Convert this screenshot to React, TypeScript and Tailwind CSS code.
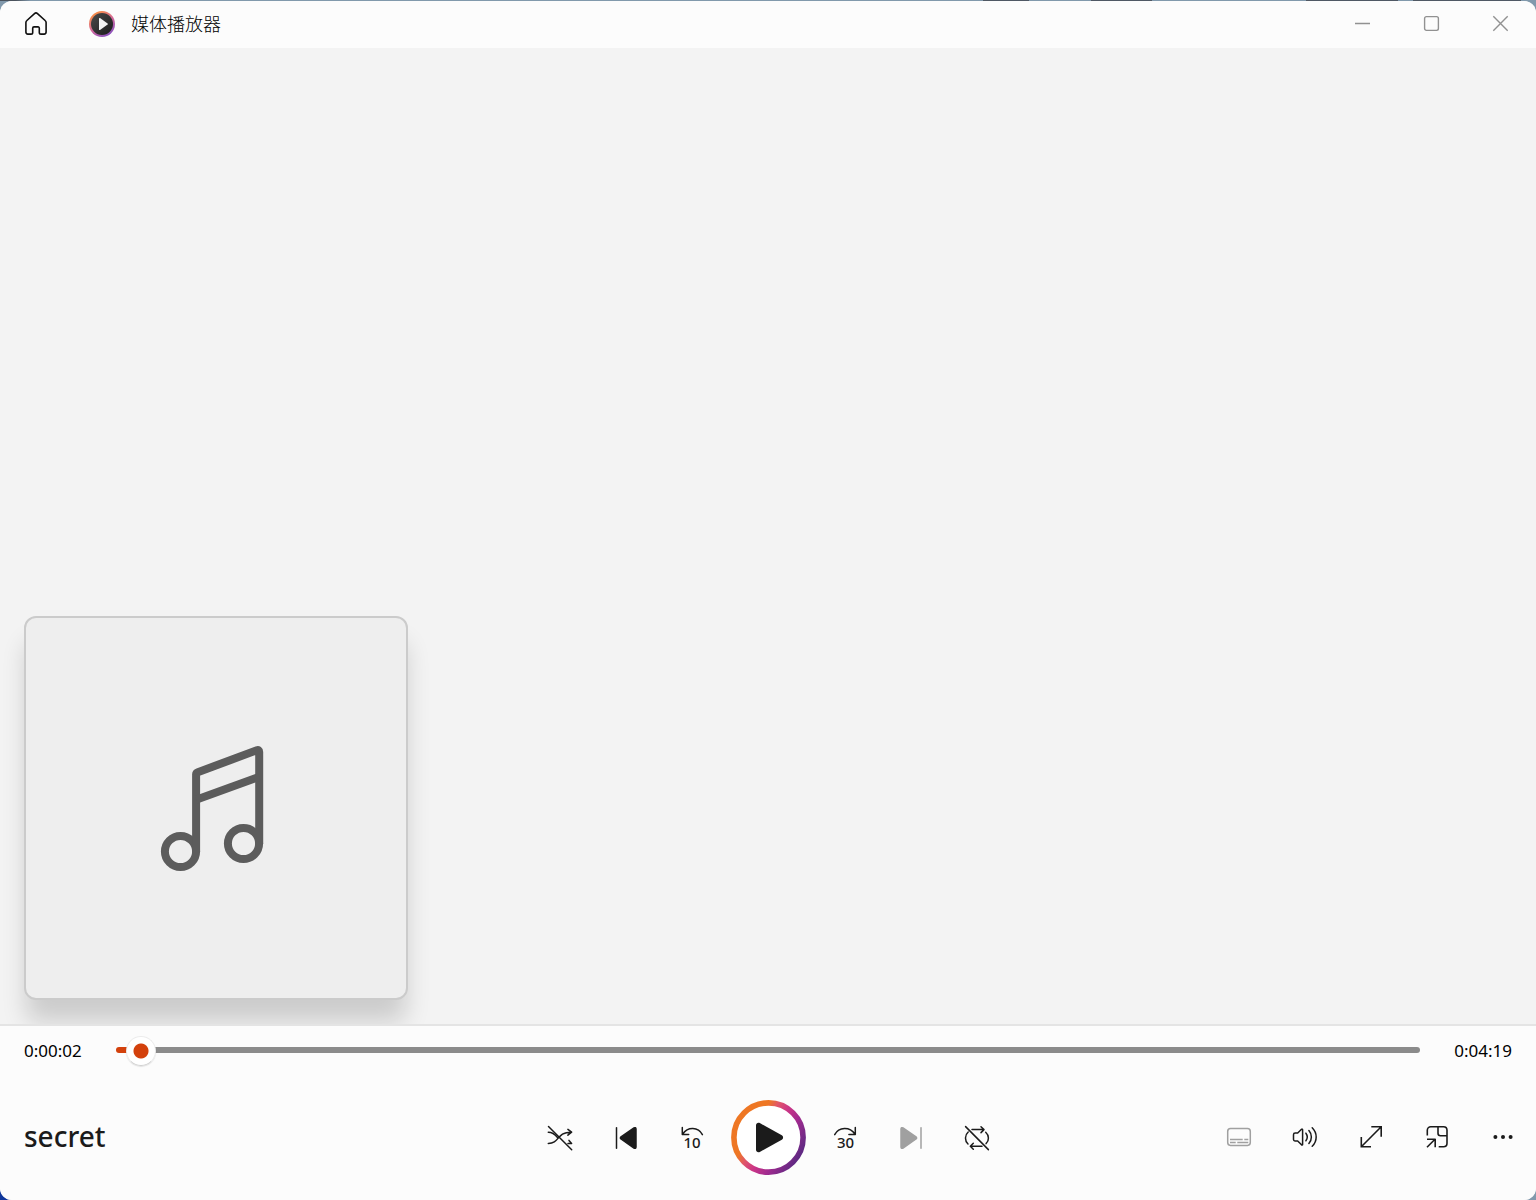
import { useState } from "react";
import type { CSSProperties, ReactNode } from "react";

function Icon({ children, w = 1.5 }: { children: ReactNode; w?: number }) {
  return (
    <svg
      viewBox="0 0 30 30"
      className="size-[30px]"
      fill="none"
      stroke="currentColor"
      strokeWidth={w}
      strokeLinecap="round"
      strokeLinejoin="round"
      aria-hidden="true"
    >
      {children}
    </svg>
  );
}

function ControlButton({ label, disabled, children }: { label: string; disabled?: boolean; children: ReactNode }) {
  return (
    <button
      type="button"
      aria-label={label}
      disabled={disabled}
      className="flex size-[60px] items-center justify-center rounded-md text-[#1b1b1b] disabled:text-[#a0a0a0]"
    >
      {children}
    </button>
  );
}

function CaptionButton({ label, children }: { label: string; children: ReactNode }) {
  return (
    <button type="button" aria-label={label} className="flex h-[45px] w-[69px] items-center justify-center text-[#919191]">
      <svg viewBox="0 0 17 17" className="size-[17px]" fill="none" stroke="currentColor" strokeWidth="1.4" aria-hidden="true">
        {children}
      </svg>
    </button>
  );
}

function TitleBar() {
  return (
    <header className="flex items-start justify-between bg-[#fcfcfc] pr-px pb-0.5">
      <div className="flex items-center">
        <button type="button" aria-label="主页" className="flex h-[45px] w-[72px] items-center justify-center text-[#111]">
          <svg viewBox="0 0 24 24" className="size-6" fill="none" stroke="currentColor" strokeWidth="1.6" strokeLinejoin="round" aria-hidden="true">
            <path d="M10.5 1.6a2.3 2.3 0 0 1 3 0l7.6 6.9c.7.6 1 1.3 1 2.1v9.5a2 2 0 0 1-2 2H17a1.7 1.7 0 0 1-1.7-1.7v-4.2c0-.8-.5-1.3-1.3-1.3h-4c-.8 0-1.3.5-1.3 1.3v4.2A1.7 1.7 0 0 1 7 22.1H3.9a2 2 0 0 1-2-2v-9.5c0-.8.3-1.5 1-2.1z" />
          </svg>
        </button>
        <svg viewBox="0 0 26 26" className="ml-[17px] size-[26px]" aria-hidden="true">
          <defs>
            <linearGradient id="logo-ring" x1="0.2" y1="0" x2="0.8" y2="1">
              <stop offset="0.1" stopColor="#f58a4b" />
              <stop offset="0.5" stopColor="#d5699a" />
              <stop offset="1" stopColor="#7f4fc4" />
            </linearGradient>
            <linearGradient id="logo-face" x1="0" y1="0" x2="1" y2="1">
              <stop offset="0" stopColor="#4a4a4a" />
              <stop offset="1" stopColor="#1c1c1c" />
            </linearGradient>
          </defs>
          <circle cx="13" cy="13" r="13" fill="url(#logo-ring)" />
          <circle cx="13" cy="13" r="11" fill="url(#logo-face)" />
          <path d="M10 7.6v10.8c0 .6.5.9 1 .6l7.6-5.400c.4-.3.400-.9 0-1.200L11 7c-.5-.3-1 0-1 .6z" fill="#f4f4f4" />
        </svg>
        <h1 className="ml-4 text-[18px] leading-6 font-light text-black">媒体播放器</h1>
      </div>
      <div className="flex">
        <CaptionButton label="最小化">
          <path d="M1 8.5h15" />
        </CaptionButton>
        <CaptionButton label="最大化">
          <rect x="1.6" y="1.6" width="13.8" height="13.8" rx="1.8" />
        </CaptionButton>
        <CaptionButton label="关闭">
          <path d="M1.3 1.3l14.4 14.4M15.7 1.3L1.3 15.7" />
        </CaptionButton>
      </div>
    </header>
  );
}

function AlbumArt() {
  return (
    <div className="flex size-96 items-center justify-center rounded-xl border-2 border-[#cbcbcb] bg-[#eeeeee] text-[#5c5c5c] shadow-[0_24px_24px_-2px_rgba(0,0,0,0.16)]">
      <svg viewBox="0 0 128 128" className="size-32" fill="none" stroke="currentColor" strokeWidth="8" aria-hidden="true">
        <circle cx="28.5" cy="107.5" r="15.6" />
        <circle cx="91.5" cy="99.5" r="15.6" />
        <path d="M44.100 108V30.500q0-1.700 1.700-2.300L104.800 6.300q2.400-.8 2.400 1.700V100" />
        <path d="M44.100 55.700l63-22.700" />
      </svg>
    </div>
  );
}

const formatTime = (total: number) => {
  const two = (n: number) => String(n).padStart(2, "0");
  return `${Math.floor(total / 3600)}:${two(Math.floor(total / 60) % 60)}:${two(total % 60)}`;
};

const DURATION = 259;

function SeekBar() {
  const [position, setPosition] = useState(2);
  const played = position / DURATION;
  const style = { "--played": `calc(15px + (100% - 30px) * ${played})` } as CSSProperties;
  return (
    <div className="flex h-12 items-center px-6 text-[17px] leading-6 text-black">
      <span className="w-[92px] pt-0.5">{formatTime(position)}</span>
      <input
        type="range"
        aria-label="播放进度"
        min={0}
        max={DURATION}
        value={position}
        onChange={(e) => setPosition(Number(e.target.value))}
        style={style}
        className="h-8 min-w-0 flex-1 appearance-none bg-transparent [&::-webkit-slider-runnable-track]:h-1.5 [&::-webkit-slider-runnable-track]:rounded-full [&::-webkit-slider-runnable-track]:bg-[linear-gradient(to_right,#d3410c_var(--played),#8b8b8b_var(--played))] [&::-webkit-slider-thumb]:-mt-[11px] [&::-webkit-slider-thumb]:size-[30px] [&::-webkit-slider-thumb]:appearance-none [&::-webkit-slider-thumb]:rounded-full [&::-webkit-slider-thumb]:border [&::-webkit-slider-thumb]:border-[#ececec] [&::-webkit-slider-thumb]:border-b-[#d0d0d0] [&::-webkit-slider-thumb]:bg-[radial-gradient(circle,#d3410c_7px,#ffffff_8px)] [&::-webkit-slider-thumb]:shadow-[0_1px_1px_rgba(0,0,0,0.1)]"
      />
      <span className="w-[92px] pt-0.5 text-right">{formatTime(DURATION)}</span>
    </div>
  );
}

function PlayButton() {
  return (
    <button type="button" aria-label="播放" className="mr-2 ml-[9px] size-[76px] rounded-full">
      <svg viewBox="0 0 76 76" className="size-[76px]" aria-hidden="true">
        <defs>
          <linearGradient id="play-ring" gradientUnits="userSpaceOnUse" x1="0" y1="0" x2="86" y2="50">
            <stop offset="0.34" stopColor="#ee7724" />
            <stop offset="0.43" stopColor="#e0566a" />
            <stop offset="0.54" stopColor="#cc3686" />
            <stop offset="0.68" stopColor="#a12b8f" />
            <stop offset="0.88" stopColor="#602983" />
          </linearGradient>
        </defs>
        <circle cx="37.5" cy="37.5" r="34.6" fill="#ffffff" stroke="url(#play-ring)" strokeWidth="5.6" />
        <path d="M25 25.200v24.600c0 2 2 3 3.800 2.100l22-12.200c1.700-1 1.700-3.400 0-4.400l-22-12.200c-1.800-.9-3.800.1-3.800 2.100z" fill="#1b1b1b" />
      </svg>
    </button>
  );
}

function Transport() {
  return (
    <div className="flex items-center pl-px">
      <div className="flex gap-1.5">
        <ControlButton label="无序播放：关">
          <Icon>
            <path d="M3.500 3.500L26.700 26.700" />
            <path d="M3.300 9.300c4.200 0 6.700 2.200 9.200 5.200M3.300 20.500c8.200 0 8.700-5.800 14.200-9.400 2.600-1.600 5-1.900 9-1.900M22.900 6.400l3.700 2.800-3.700 3M24 17.400l2.600 3.100M23 20.500h3.500" />
          </Icon>
        </ControlButton>
        <ControlButton label="上一个">
          <Icon>
            <path d="M5.500 4.800v20.400" />
            <path d="M25 6v18c0 1.200-1 1.700-2 1.100L10 16c-.8-.6-.8-1.500 0-2.100L23 4.900c1-.6 2-.1 2 1.100z" fill="currentColor" />
          </Icon>
        </ControlButton>
        <ControlButton label="后退 10 秒">
          <Icon>
            <path d="M5.300 4.500v7h6.400M5.700 11c5-7.500 15.500-7.500 19.700.6" />
            <text x="15" y="25" textAnchor="middle" fill="currentColor" stroke="none" className="text-[15px] font-medium">
              10
            </text>
          </Icon>
        </ControlButton>
      </div>
      <PlayButton />
      <div className="flex gap-1.5">
        <ControlButton label="前进 30 秒">
          <Icon>
            <path d="M25.300 4.500v7h-6.400M24.900 11c-5-7.500-16-7.500-20.200.6" />
            <text x="15.500" y="25" textAnchor="middle" fill="currentColor" stroke="none" className="text-[15px] font-medium">
              30
            </text>
          </Icon>
        </ControlButton>
        <ControlButton label="下一个" disabled>
          <Icon>
            <path d="M25 4.800v20.400" />
            <path d="M5 6v18c0 1.200 1 1.700 2 1.100L20 16c.8-.6.8-1.500 0-2.100L7 4.900c-1-.6-2-.1-2 1.100z" fill="currentColor" />
          </Icon>
        </ControlButton>
        <ControlButton label="重复：关">
          <Icon>
            <path d="M3.600 3.600L26.400 26.600M10 6.600h11.800M19 3.700l3 2.900-3 3M23.700 9.300c3.500 3.200 3.600 8 .4 11.300M6.200 9c-3.600 3.200-3.600 8.700-.2 12M20 23.200H8.400M11.300 20.300l-3 2.900 3 3" />
          </Icon>
        </ControlButton>
      </div>
    </div>
  );
}

function SideControls() {
  return (
    <div className="flex items-center justify-end gap-1.5 pr-[3px]">
      <ControlButton label="字幕" disabled>
        <Icon>
          <rect x="3.700" y="5.600" width="22.600" height="16.800" rx="2.800" />
          <path strokeLinecap="butt" d="M6 16.500h12.700M20.300 16.500h4M6 19.500h5.700M13.300 19.500h11" />
        </Icon>
      </ControlButton>
      <ControlButton label="音量">
        <Icon>
          <path d="M12.600 6.700v14.700c0 .6-.6.800-1.100.4L7.700 18H5.200c-1 0-1.700-.7-1.700-1.700v-4.600c0-1 .7-1.700 1.700-1.700h2.500l3.800-3.700c.5-.4 1.100-.2 1.100.4zM15.900 10.200c1.600 2.200 1.600 5.400 0 7.600M18.900 7.500c3.300 3.700 3.300 9.300 0 13M22.200 4.700c5.300 5.200 5.300 13.400 0 18.600" />
        </Icon>
      </ControlButton>
      <ControlButton label="全屏">
        <Icon w={1.6}>
          <path strokeLinecap="butt" strokeLinejoin="miter" d="M5.300 23.700L25.200 3.800M15.300 3.800h9.900v9.900M5.300 14v9.700h9.700" />
        </Icon>
      </ControlButton>
      <ControlButton label="迷你播放器">
        <Icon w={1.6}>
          <path strokeLinecap="butt" d="M5.300 12.500V7.300c0-2 1.500-3.500 3.500-3.500h12.700c2 0 3.500 1.500 3.500 3.500v12.900c0 2-1.500 3.500-3.500 3.500h-4.800M16 3.800v6.500c0 1.500 1 2.500 2.500 2.500H25M5 24.200l8-8M5 16.200h8.200v8" />
        </Icon>
      </ControlButton>
      <ControlButton label="更多选项">
        <Icon>
          <g fill="currentColor" stroke="none">
            <circle cx="7.400" cy="14" r="2" />
            <circle cx="15" cy="14" r="2" />
            <circle cx="22.600" cy="14" r="2" />
          </g>
        </Icon>
      </ControlButton>
    </div>
  );
}

export default function App() {
  return (
    <div
      lang="zh-CN"
      className="flex min-h-screen flex-col bg-[#8199ac] bg-[radial-gradient(circle_at_bottom_left,#0f379b_20px,#8199ac_60px)] font-['Noto_Sans','Noto_Sans_CJK_SC',sans-serif]"
    >
      <div className="h-px bg-[linear-gradient(to_right,#4a525c_1%,#8199ac_2%,#8199ac_64%,#4f5864_64%,#4f5864_67%,#8199ac_67%,#8199ac_71%,#4f5864_71%,#4f5864_75%,#8199ac_75%,#8199ac_85%,#4f5864_85%,#4f5864_91%,#8199ac_91%,#8199ac_92%,#4f5864_92%,#4f5864_99%,#8199ac_99%)]" />
      <div className="flex flex-1 flex-col overflow-hidden rounded-xl bg-[#f3f3f3]">
        <TitleBar />
        <main className="flex flex-1 items-end px-6 pb-6">
          <AlbumArt />
        </main>
        <footer className="relative border-t-2 border-[#e4e4e4] bg-[#fcfcfc] pb-6">
          <SeekBar />
          <div className="mt-[26px] grid grid-cols-[1fr_auto_1fr] items-center">
            <h2 className="truncate pb-1 pl-6 text-[28px] leading-9 font-medium text-[#1b1b1b]">secret</h2>
            <Transport />
            <SideControls />
          </div>
        </footer>
      </div>
    </div>
  );
}
